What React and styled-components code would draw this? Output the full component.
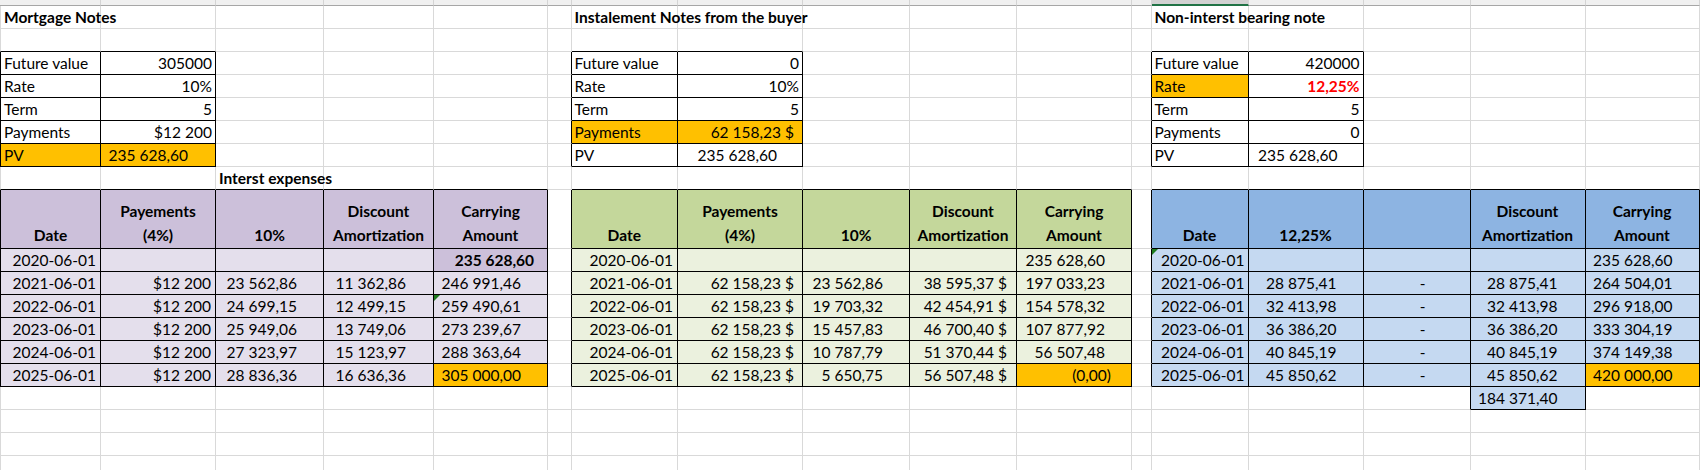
import React from "react";
import styled, { createGlobalStyle, css } from "styled-components";

const Global = createGlobalStyle`
  html, body { margin: 0; padding: 0; background: #fff; overflow: hidden; }
  body { font-family: Lato, "Open Sans", "Liberation Sans", sans-serif; }
`;

const COLS = [101, 115, 108, 110, 114, 23.5, 106.5, 125, 107, 107, 115, 19.5, 97, 115, 107, 115, 114];
const ROWS = [6, 23, 23, 23, 23, 23, 23, 23, 23, 59, 23, 23, 23, 23, 23, 23, 23, 23, 23, 23];

const Sheet = styled.div`
  display: grid;
  grid-template-columns: ${COLS.map((w) => w + "px").join(" ")};
  grid-template-rows: ${ROWS.map((h) => h + "px").join(" ")};
  width: 1700px;
  height: 470px;
  overflow: hidden;
  font-size: 15.5px;
  color: #000;
`;

const HeadStrip = styled.div`
  border-right: 1px solid #d4d4d4;
  border-bottom: ${(p) => (p.$sel ? "2px solid #217346" : "1px solid #a6a6a6")};
  background: ${(p) => (p.$sel ? "#d2d2d2" : "#f0f0f0")};
  box-sizing: border-box;
`;

const Cell = styled.div`
  position: relative;
  box-sizing: border-box;
  display: flex;
  align-items: ${(p) => (p.$head ? "flex-end" : "center")};
  justify-content: ${(p) => (p.$align === "right" ? "flex-end" : p.$align === "center" ? "center" : "flex-start")};
  text-align: ${(p) => p.$align || "left"};
  padding: ${(p) => (p.$head ? "0 2px 1px" : `0 ${p.$pr ?? 3}px 0 ${p.$pl ?? 3}px`)};
  white-space: ${(p) => (p.$head ? "normal" : "nowrap")};
  line-height: ${(p) => (p.$head ? "24px" : "22px")};
  overflow: visible;
  background: ${(p) => p.$bg || "transparent"};
  font-weight: ${(p) => (p.$bold ? 700 : 400)};
  color: ${(p) => p.$color || "#000"};
  border-right: 1px solid ${(p) => (p.$rb ? "#000" : "#d9d9d9")};
  border-bottom: 1px solid ${(p) => (p.$bb ? "#000" : "#d9d9d9")};
  ${(p) => p.$first && css`border-left: 1px solid ${p.$lb ? "#000" : "#d9d9d9"};`}
  ${(p) =>
    p.$tri &&
    css`
      &::before {
        content: "";
        position: absolute;
        left: 0;
        top: 0;
        border-top: 6px solid #1e7b1e;
        border-right: 6px solid transparent;
      }
    `}
`;

const Title = styled.span`
  font-weight: 700;
  position: relative;
  z-index: 1;
`;

const Head = styled.span`
  display: block;
  width: 100%;
  text-align: center;
`;

const PUR_H = "#ccc0da", PUR = "#e4dfec";
const GRN_H = "#c4d79b", GRN = "#ebf1de";
const BLU_H = "#8db4e2", BLU = "#c5d9f1";
const ORG = "#ffc000";

const tables = [
  [3, 7, 0, 1], [9, 15, 0, 4],
  [3, 7, 6, 7], [9, 15, 6, 10],
  [3, 7, 12, 13], [9, 15, 12, 16],
  [16, 16, 15, 15],
];
const inT = (r, c) => tables.some(([r0, r1, c0, c1]) => r >= r0 && r <= r1 && c >= c0 && c <= c1);

const cells = {};
const set = (r, c, o) => (cells[r + "," + c] = o);

// titles
set(1, 0, { title: "Mortgage  Notes" });
set(1, 6, { title: "Instalement Notes from the buyer" });
set(1, 12, { title: "Non-interst bearing note" });
set(8, 2, { title: "Interst expenses" });

// small tables
const small = (c, rows) =>
  rows.forEach(([l, v, o = {}], i) => {
    set(3 + i, c, { v: l, bg: o.lbg });
    set(3 + i, c + 1, { v, align: o.left ? "right" : "right", pr: o.pr ?? 3, bg: o.vbg, bold: o.bold, color: o.color });
  });
small(0, [
  ["Future value", "305000"],
  ["Rate", "10%"],
  ["Term", "5"],
  ["Payments", "$12 200"],
  ["PV", "235 628,60", { lbg: ORG, vbg: ORG, pr: 27 }],
]);
small(6, [
  ["Future value", "0"],
  ["Rate", "10%"],
  ["Term", "5"],
  ["Payments", "62 158,23 $", { lbg: ORG, vbg: ORG, pr: 8 }],
  ["PV", "235 628,60", { pr: 25 }],
]);
small(12, [
  ["Future value", "420000"],
  ["Rate", "12,25%", { lbg: ORG, bold: true, color: "#ff0000" }],
  ["Term", "5"],
  ["Payments", "0"],
  ["PV", "235 628,60", { pr: 25 }],
]);

// big tables
const big = (c0, hbg, bg, heads, rows, pads) => {
  heads.forEach((h, i) => set(9, c0 + i, { head: h, bg: hbg }));
  rows.forEach((row, ri) =>
    row.forEach((v, i) => {
      const o = typeof v === "object" && v !== null ? v : { v };
      set(10 + ri, c0 + i, { v: o.v, align: "right", pr: o.pr ?? pads[i], bg: o.bg || bg, bold: o.bold, tri: o.tri });
    })
  );
};

const dates = ["2020-06-01", "2021-06-01", "2022-06-01", "2023-06-01", "2024-06-01", "2025-06-01"];

big(0, PUR_H, PUR, [["Date"], ["Payements", "(4%)"], ["10%"], ["Discount", "Amortization"], ["Carrying", "Amount"]], [
  [dates[0], "", "", "", { v: "235 628,60", bold: true, bg: PUR_H, pr: 13 }],
  [dates[1], "$12 200", "23 562,86", "11 362,86", "246 991,46"],
  [dates[2], "$12 200", "24 699,15", "12 499,15", { v: "259 490,61", tri: true }],
  [dates[3], "$12 200", "25 949,06", "13 749,06", "273 239,67"],
  [dates[4], "$12 200", "27 323,97", "15 123,97", "288 363,64"],
  [dates[5], "$12 200", "28 836,36", "16 636,36", { v: "305 000,00", bg: ORG }],
], [4, 4, 26, 27, 26]);

big(6, GRN_H, GRN, [["Date"], ["Payements", "(4%)"], ["10%"], ["Discount", "Amortization"], ["Carrying", "Amount"]], [
  [dates[0], "", "", "", "235 628,60"],
  [dates[1], "62 158,23 $", "23 562,86", "38 595,37 $", "197 033,23"],
  [dates[2], "62 158,23 $", "19 703,32", "42 454,91 $", "154 578,32"],
  [dates[3], "62 158,23 $", "15 457,83", "46 700,40 $", "107 877,92"],
  [dates[4], "62 158,23 $", "10 787,79", "51 370,44 $", "56 507,48"],
  [dates[5], "62 158,23 $", "5 650,75", "56 507,48 $", { v: "(0,00)", bg: ORG, pr: 20 }],
], [4, 8, 26, 9, 26]);

big(12, BLU_H, BLU, [["Date"], ["12,25%"], [""], ["Discount", "Amortization"], ["Carrying", "Amount"]], [
  [{ v: dates[0], tri: true }, "", "", "", "235 628,60"],
  [dates[1], "28 875,41", "-", "28 875,41", "264 504,01"],
  [dates[2], "32 413,98", "-", "32 413,98", "296 918,00"],
  [dates[3], "36 386,20", "-", "36 386,20", "333 304,19"],
  [dates[4], "40 845,19", "-", "40 845,19", "374 149,38"],
  [dates[5], "45 850,62", "-", "45 850,62", { v: "420 000,00", bg: ORG }],
], [3, 26, 44, 27, 26]);
set(16, 15, { v: "184 371,40", align: "right", pr: 27, bg: BLU });

export default function App() {
  const out = [];
  COLS.forEach((_, c) => out.push(<HeadStrip key={"h" + c} $sel={c === 12} />));
  for (let r = 1; r < ROWS.length; r++) {
    COLS.forEach((_, c) => {
      const d = cells[r + "," + c] || {};
      const rb = inT(r, c) || inT(r, c + 1);
      const bb = inT(r, c) || inT(r + 1, c);
      out.push(
        <Cell
          key={r + "-" + c}
          $rb={rb}
          $bb={bb}
          $first={c === 0}
          $lb={inT(r, 0)}
          $bg={d.bg}
          $bold={d.bold}
          $color={d.color}
          $align={d.align}
          $pr={d.pr}
          $head={!!d.head}
          $tri={d.tri}
        >
          {d.title ? <Title>{d.title}</Title> : null}
          {d.head ? (
            <Head>
              <b>{d.head.map((t, i) => (
                <React.Fragment key={i}>
                  {i > 0 && <br />}
                  {t}
                </React.Fragment>
              ))}</b>
            </Head>
          ) : null}
          {d.v}
        </Cell>
      );
    });
  }
  return (
    <>
      <Global />
      <Sheet>{out}</Sheet>
    </>
  );
}
